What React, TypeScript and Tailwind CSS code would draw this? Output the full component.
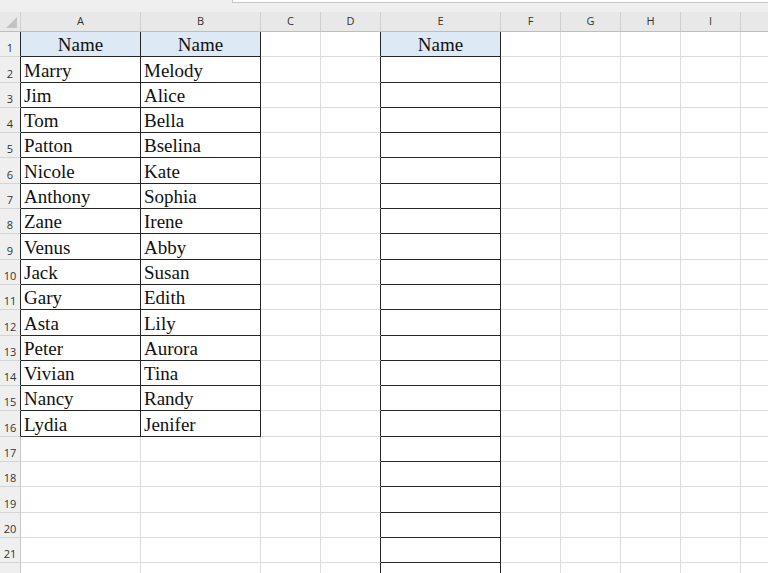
const colA = ["Marry", "Jim", "Tom", "Patton", "Nicole", "Anthony", "Zane", "Venus", "Jack", "Gary", "Asta", "Peter", "Vivian", "Nancy", "Lydia"];
const colB = ["Melody", "Alice", "Bella", "Bselina", "Kate", "Sophia", "Irene", "Abby", "Susan", "Edith", "Lily", "Aurora", "Tina", "Randy", "Jenifer"];

const columns = [
  { key: "A", w: "w-[120px]" },
  { key: "B", w: "w-[120px]" },
  { key: "C", w: "w-[60px]" },
  { key: "D", w: "w-[60px]" },
  { key: "E", w: "w-[120px]" },
  { key: "F", w: "w-[60px]" },
  { key: "G", w: "w-[60px]" },
  { key: "H", w: "w-[60px]" },
  { key: "I", w: "w-[60px]" },
  { key: "", w: "w-[60px]" },
];

const ROWS = 22;

// which cells carry the thin black "all borders" box
function inTable(r: number, c: number) {
  if (r < 1 || c < 0) return false;
  if ((c === 0 || c === 1) && r <= 16) return true;
  if (c === 4 && r <= 23) return true;
  return false;
}

function cellText(r: number, c: number) {
  if (r === 1 && (c === 0 || c === 1 || c === 4)) return "Name";
  if (r >= 2 && r <= 16) {
    if (c === 0) return colA[r - 2];
    if (c === 1) return colB[r - 2];
  }
  return "";
}

function Cell({ r, c }: { r: number; c: number }) {
  const col = columns[c];
  const darkRight = inTable(r, c) || inTable(r, c + 1);
  const darkBottom = inTable(r, c) || inTable(r + 1, c);
  const header = r === 1 && inTable(r, c);
  const text = cellText(r, c);
  return (
    <div
      className={`${col.w} shrink-0 h-full border-r border-b flex items-end overflow-hidden whitespace-nowrap ${
        darkRight ? "border-r-[#262626]" : "border-r-[#dcdcdc]"
      } ${darkBottom ? "border-b-[#262626]" : "border-b-[#dcdcdc]"} ${
        header ? "bg-[#ddeaf6] justify-center" : "bg-white pl-[3px]"
      }`}
    >
      <span className="text-[19px] leading-[22px] text-[#111]">{text}</span>
    </div>
  );
}

export default function App() {
  return (
    <div className="w-[768px] h-[573px] overflow-hidden bg-white font-['Liberation_Serif',serif]">
      {/* formula bar remnant */}
      <div className="h-[12px] bg-[#efefef] flex">
        <div className="w-[232px]" />
        <div className="flex-1 h-[3px] bg-white border-l border-b border-[#c6c6c6]" />
      </div>

      {/* column letters */}
      <div className="h-[20px] flex bg-[#e8e8e8] border-b border-[#bdbdbd] font-['Open_Sans',sans-serif] text-[11px] text-[#333]">
        <div className="w-[21px] shrink-0 relative border-r border-[#cfcfcf]">
          <div className="absolute right-[3px] bottom-[3px] w-0 h-0 border-l-[11px] border-l-transparent border-b-[11px] border-b-[#c3c3c3]" />
        </div>
        {columns.map((col, i) => (
          <div key={i} className={`${col.w} shrink-0 border-r border-[#cfcfcf] flex items-center justify-center`}>
            {col.key}
          </div>
        ))}
      </div>

      {/* rows */}
      {Array.from({ length: ROWS }, (_, i) => i + 1).map((r) => (
        <div key={r} className="h-[25.3px] flex">
          <div
            className={`w-[21px] shrink-0 bg-[#efefef] border-r border-b border-b-[#d4d4d4] ${
              inTable(r, 0) ? "border-r-[#262626]" : "border-r-[#c8c8c8]"
            } flex items-end justify-center pb-[1px] font-['Open_Sans',sans-serif] text-[11px] leading-[15px] text-[#333]`}
          >
            {r <= 21 ? r : ""}
          </div>
          {columns.map((_, c) => (
            <Cell key={c} r={r} c={c} />
          ))}
        </div>
      ))}
    </div>
  );
}
